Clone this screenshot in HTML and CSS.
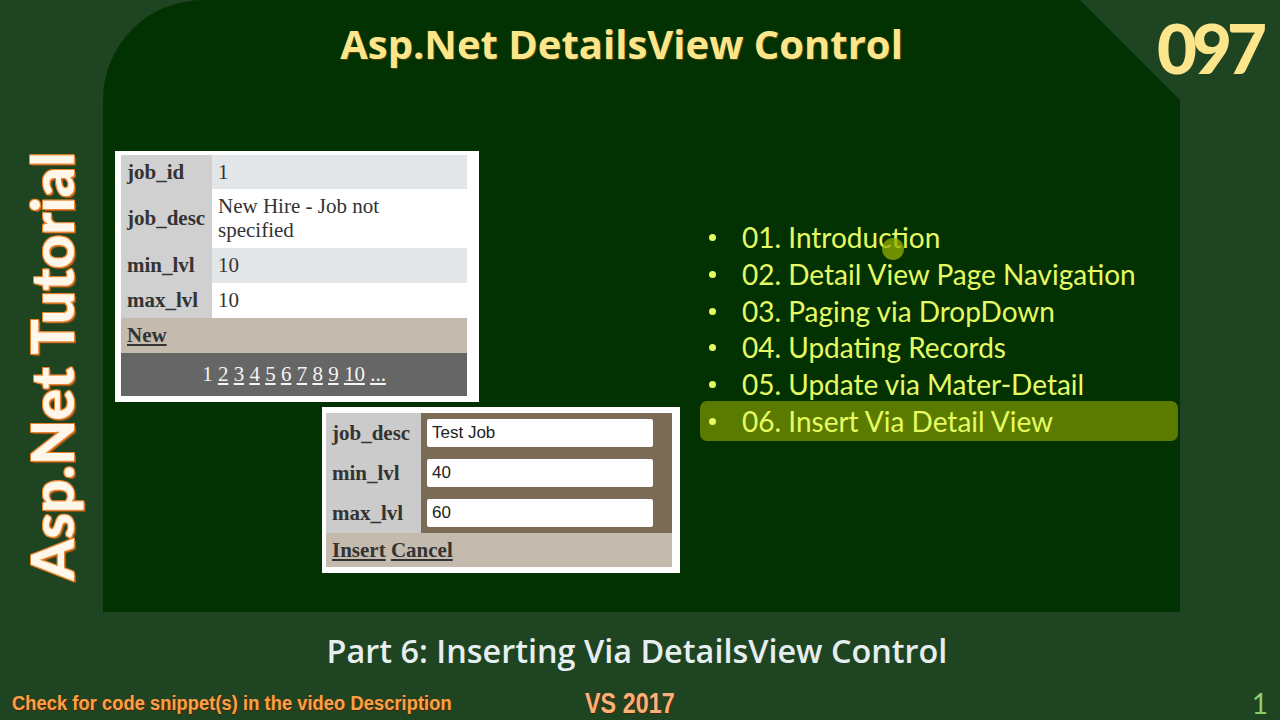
FILE: index.html
```html
<!DOCTYPE html>
<html lang="en">
<head>
    <meta charset="UTF-8">
    <link rel="stylesheet" href="styles.css">
    <title>Asp.Net DetailsView Control</title>
</head>
<body>

<div class="slide">
    <aside class="side">
        <span class="side-title">Asp.Net Tutorial</span>
    </aside>

    <main class="panel">
        <h1 class="title">Asp.Net DetailsView Control</h1>

        <div class="content">
            <div class="demo">
                <div class="dv-frame">
                    <table class="dv">
                        <tr class="alt first"><th>job_id</th><td>1</td></tr>
                        <tr><th>job_desc</th><td>New Hire - Job not<br>specified</td></tr>
                        <tr class="alt"><th>min_lvl</th><td>10</td></tr>
                        <tr><th>max_lvl</th><td>10</td></tr>
                        <tr class="cmd"><td colspan="2"><a href="#">New</a></td></tr>
                        <tr class="pager"><td colspan="2">1 <a href="#">2</a> <a href="#">3</a> <a href="#">4</a> <a href="#">5</a> <a href="#">6</a> <a href="#">7</a> <a href="#">8</a> <a href="#">9</a> <a href="#">10</a> <a href="#">...</a></td></tr>
                    </table>
                </div>

                <div class="dv-frame insert">
                    <table class="dv">
                        <tr><th>job_desc</th><td><input type="text" value="Test Job"></td></tr>
                        <tr><th>min_lvl</th><td><input type="text" value="40"></td></tr>
                        <tr><th>max_lvl</th><td><input type="text" value="60"></td></tr>
                        <tr class="cmd"><td colspan="2"><a href="#">Insert</a> <a href="#">Cancel</a></td></tr>
                    </table>
                </div>
            </div>

            <ul class="topics">
                <li>01. Introduction</li>
                <li>02. Detail View Page Navigation</li>
                <li>03. Paging via DropDown</li>
                <li>04. Updating Records</li>
                <li>05. Update via Mater-Detail</li>
                <li class="active">06. Insert Via Detail View</li>
            </ul>
        </div>

        <span class="pointer"></span>
    </main>

    <div class="episode">097</div>

    <footer class="footer">
        <div class="subtitle">Part 6: Inserting Via DetailsView Control</div>
        <div class="bottom">
            <span class="note">Check for code snippet(s) in the video Description</span>
            <span class="version">VS 2017</span>
            <span class="page-no">1</span>
        </div>
    </footer>
</div>

</body>
</html>
```

FILE: styles.css
```css
body {
    margin: 0;
    background-color: #1f4422; /* outer green */
    font-family: 'Lato', 'Open Sans', sans-serif;
    overflow: hidden;
}

.slide {
    position: relative;
    display: grid;
    grid-template-columns: 103px 1077px 100px;
    grid-template-rows: 612px 108px;
    width: 1280px;
    height: 720px;
}

/* left strip */
.side {
    display: flex;
    align-items: flex-end;
    justify-content: center;
    padding-bottom: 32px;
}

.side-title {
    writing-mode: vertical-rl;
    transform: rotate(180deg);
    font-size: 59px;
    font-weight: 900;
    line-height: 1;
    color: #fff7ea;
    text-shadow: 1px 0 0 #e8842e, -1px 0 0 #e8842e, 0 1px 0 #e8842e, 0 -1px 0 #e8842e,
                 1px 1px 0 #e8842e, -1px -1px 0 #e8842e, 1px -1px 0 #e8842e, -1px 1px 0 #e8842e,
                 -2px 2px 1px #b55a18;
}

/* main dark panel */
.panel {
    position: relative;
    background-color: #023102;
    border-top-left-radius: 100px;
    clip-path: polygon(0 0, 977px 0, 1077px 100px, 100% 100%, 0 100%);
}

.title {
    margin: 20px 40px 0 0;
    text-align: center;
    font-family: 'Open Sans', sans-serif;
    font-size: 40px;
    font-weight: 700;
    line-height: 48px;
    color: #fde68a;
    text-shadow: 1px 1px 1px #5a4a10;
}

.content {
    display: flex;
    gap: 20px;
    margin-top: 83px;
}

.demo {
    padding-left: 12px;
    width: 565px;
}

.dv-frame {
    width: fit-content;
    background-color: #fff;
    padding: 4px 12px 6px 6px;
}

.dv-frame.insert {
    margin: 5px 0 0 207px;
    padding: 6px 8px 6px 4px;
}

.dv {
    border-collapse: collapse;
    width: 346px;
    font-family: 'Liberation Serif', serif;
    font-size: 21px;
    line-height: 24px;
    color: #333;
}

.dv th {
    width: 79px;
    padding: 5px 6px 6px;
    text-align: left;
    font-weight: bold;
    background-color: #d0d0d0;
}

.dv td {
    padding: 5px 6px 6px;
    background-color: #fff;
}

.dv tr.first th,
.dv tr.first td {
    padding-bottom: 5px;
}

.dv tr.alt td {
    background-color: #e3e6e8;
}

.dv tr.cmd td {
    background-color: #c4baae;
    font-weight: bold;
    padding: 5px 6px 6px;
}

.dv a {
    color: #333;
}

.dv tr.pager td {
    background-color: #666;
    color: #f4f4f4;
    text-align: center;
    padding: 9px 6px 10px;
}

.dv tr.pager a {
    color: #f4f4f4;
}

.insert .dv th {
    width: 83px;
    padding: 6px 6px;
    background-color: #cbcbcb;
}

.insert .dv td {
    background-color: #7b6c57;
    padding: 6px 19px 6px 6px;
}

.insert .dv tr.cmd td {
    background-color: #c4baae;
    padding: 5px 6px;
}

.dv input {
    display: block;
    box-sizing: border-box;
    width: 226px;
    height: 28px;
    padding: 0 5px;
    border: none;
    border-radius: 2px;
    font-family: 'Liberation Sans', Arial, sans-serif;
    font-size: 17px;
    color: #222;
    background-color: #fff;
}

/* topic list */
.topics {
    list-style: none;
    margin: 68px 0 0;
    padding: 0;
    width: 478px;
    font-size: 28px;
    color: #e6fb62;
}

.topics li {
    position: relative;
    height: 36.8px;
    line-height: 36.8px;
    padding-left: 42px;
}

.topics li::before {
    content: "";
    position: absolute;
    left: 9px;
    top: 15px;
    width: 7px;
    height: 7px;
    border-radius: 50%;
    background-color: #e6fb62;
}

.topics li.active {
    background-color: #5a7a00;
    border-radius: 7px;
    height: 40px;
    line-height: 40px;
    margin-top: -2px;
}

.topics li.active::before {
    top: 17px;
}

.pointer {
    position: absolute;
    left: 779px;
    top: 238px;
    width: 22px;
    height: 22px;
    border-radius: 50%;
    background-color: rgba(150, 175, 0, 0.75);
}

.episode {
    position: absolute;
    top: 8px;
    right: 18px;
    font-size: 69px;
    font-weight: 900;
    letter-spacing: -5px;
    line-height: 80px;
    color: #fde58c;
}

/* footer */
.footer {
    grid-column: 1 / 4;
    display: flex;
    flex-direction: column;
}

.subtitle {
    height: 74px;
    line-height: 76px;
    text-align: center;
    padding-right: 6px;
    font-family: 'Open Sans', sans-serif;
    font-size: 32.4px;
    font-weight: 600;
    color: #e6eef0;
}

.bottom {
    display: grid;
    grid-template-columns: 573px auto 1fr;
    align-items: center;
    padding: 0 12px;
    height: 30px;
}

.note,
.version {
    display: inline-block;
    transform-origin: left center;
    font-family: 'Liberation Sans', Arial, sans-serif;
    font-weight: bold;
    color: #f4a24a;
    text-shadow: 1px 1px 0 #4a2200, -1px 0 0 #6a3400;
}

.note {
    font-size: 20px;
    transform: scaleX(0.92);
}

.version {
    font-size: 30px;
    transform: scaleX(0.78);
    color: #f6b27a;
}

.page-no {
    justify-self: end;
    font-size: 28px;
    color: #8ccf6a;
}
```
